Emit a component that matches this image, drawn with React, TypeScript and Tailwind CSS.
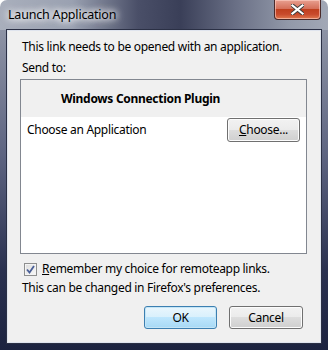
import React from "react";

const font = { fontFamily: '"Segoe UI", "Noto Sans", "Open Sans", sans-serif' };

function Btn({ children, def, className }: { children: React.ReactNode; def?: boolean; className?: string }) {
  return (
    <div
      className={
        "flex items-center justify-center rounded-[3px] border text-[12px] text-black " +
        (def
          ? "border-[#3c7fb1] bg-[linear-gradient(#eaf6fd_0%,#d9f0fc_49%,#bee6fd_50%,#a7d9f5_100%)] shadow-[inset_0_0_0_1px_#c4e5f6] "
          : "border-[#707070] bg-[linear-gradient(#f2f2f2_0%,#ebebeb_49%,#dddddd_50%,#cfcfcf_100%)] shadow-[inset_0_0_0_1px_#fcfcfc] ") +
        (className ?? "")
      }
    >
      {children}
    </div>
  );
}

export default function App() {
  return (
    <div
      className="relative flex h-[350px] w-[328px] flex-col overflow-hidden rounded-t-[7px] bg-[linear-gradient(90deg,#a9afbc_0%,#9aa1b1_22%,#4a4f68_42%,#3a3f58_55%,#6a7086_72%,#9299a9_88%,#a2a8b6_100%)] tracking-[-0.3px]"
      style={font}
    >
      {/* Title bar */}
      <div className="flex h-[30px] shrink-0 items-start">
        <div className="pl-[8px] pt-[7px] text-[12.5px] leading-[16px] tracking-[-0.2px] text-black [text-shadow:0_0_6px_#fff,0_0_8px_#fff,0_0_10px_#fff]">
          Launch Application
        </div>
        <div className="ml-auto mr-[7px] flex h-[20px] w-[47px] items-center justify-center rounded-b-[4px] border border-t-0 border-[#4a2a2a] bg-[linear-gradient(#e8a090_0%,#d5705a_45%,#c0401f_50%,#c84a2c_75%,#e07a50_100%)] shadow-[inset_0_0_0_1px_rgba(255,210,200,0.6)]">
          <svg width="13" height="11" viewBox="0 0 13 11">
            <path d="M1.5 1.5 L11.5 9.5 M11.5 1.5 L1.5 9.5" stroke="#3a3a3a" strokeWidth="4" strokeLinecap="square" />
            <path d="M1.5 1.5 L11.5 9.5 M11.5 1.5 L1.5 9.5" stroke="#ffffff" strokeWidth="2.2" strokeLinecap="square" />
          </svg>
        </div>
      </div>

      {/* Body frame */}
      <div className="flex flex-1 px-[7px] pb-[7px] bg-[linear-gradient(#8d93a5_0%,#5c6380_40%,#2a3150_75%,#1c2340_100%)]">
        <div className="flex flex-1 flex-col border border-[#dfe4ee] bg-[#f0f0f0] px-[12px] text-[12px] text-black outline outline-1 outline-[#2b3045]">
          <div className="mt-[8px] leading-[16px] pl-[2px]">This link needs to be opened with an application.</div>
          <div className="mt-[5px] leading-[16px] pl-[2px]">Send to:</div>
          <div className="mt-[3px] flex h-[175px] w-[287px] flex-col border border-[#828790] bg-white">
            <div className="flex h-[37px] items-center justify-center bg-[#f0f0f0] pr-[46px] font-bold">
              Windows Connection Plugin
            </div>
            <div className="flex items-center pl-[6px] pr-[6px] pt-[1px]">
              <span className="flex-1">Choose an Application</span>
              <Btn className="h-[24px] w-[73px]">
                <span>
                  <span className="underline">C</span>hoose...
                </span>
              </Btn>
            </div>
          </div>
          <div className="mt-[7px] flex items-center pl-[4px]">
            <div className="flex h-[13px] w-[13px] items-center justify-center border border-[#8e8f8f] bg-[linear-gradient(135deg,#dcdcdc,#fafafa)] shadow-[inset_0_0_0_1px_#f4f4f4]">
              <svg width="9" height="9" viewBox="0 0 9 9">
                <path d="M1 4.5 L3.5 7.5 L8 1" fill="none" stroke="#4a5f97" strokeWidth="1.8" />
              </svg>
            </div>
            <span className="ml-[5px] leading-[16px]">
              <span className="underline">R</span>emember my choice for remoteapp links.
            </span>
          </div>
          <div className="mt-[3px] leading-[16px] pl-[2px]">This can be changed in Firefox's preferences.</div>
          <div className="mt-[10px] flex justify-end gap-[12px] pr-[5px]">
            <Btn def className="h-[23px] w-[73px]">OK</Btn>
            <Btn className="h-[23px] w-[74px]">Cancel</Btn>
          </div>
        </div>
      </div>
    </div>
  );
}
